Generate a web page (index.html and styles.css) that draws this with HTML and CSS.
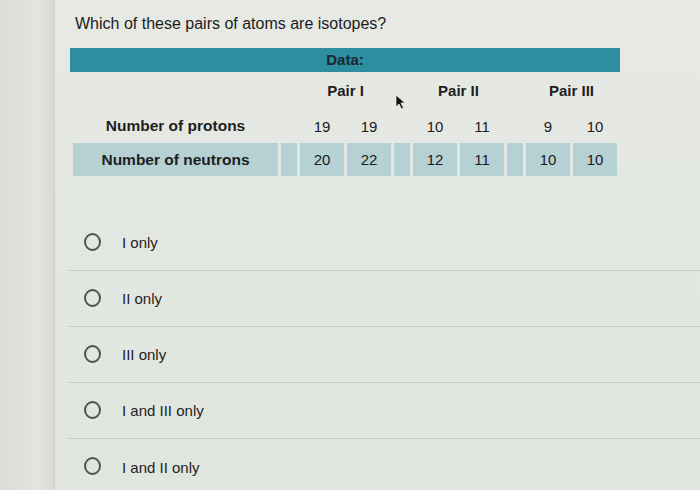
FILE: index.html
```html
<!DOCTYPE html>
<html>
<head>
<meta charset="utf-8">
<link rel="stylesheet" href="styles.css">
</head>
<body>
<div class="screen">
  <div class="strip"></div>
  <div class="panel">
    <p class="question">Which of these pairs of atoms are isotopes?</p>
    <div class="data-bar">Data:</div>
    <table class="data">
      <tr class="head-row">
        <td class="label"></td>
        <td class="sp"></td>
        <td class="pair" colspan="2">Pair I</td>
        <td class="sp"></td>
        <td class="pair" colspan="2">Pair II</td>
        <td class="sp"></td>
        <td class="pair" colspan="2">Pair III</td>
      </tr>
      <tr class="row-protons">
        <td class="label">Number of protons</td>
        <td class="sp"></td>
        <td class="v">19</td><td class="v">19</td>
        <td class="sp"></td>
        <td class="v">10</td><td class="v">11</td>
        <td class="sp"></td>
        <td class="v">9</td><td class="v">10</td>
      </tr>
      <tr class="row-neutrons">
        <td class="label">Number of neutrons</td>
        <td class="sp"></td>
        <td class="v">20</td><td class="v">22</td>
        <td class="sp"></td>
        <td class="v">12</td><td class="v">11</td>
        <td class="sp"></td>
        <td class="v">10</td><td class="v">10</td>
      </tr>
    </table>
    <ul class="options">
      <li class="option"><span class="radio"></span><span class="opt-text">I only</span></li>
      <li class="option"><span class="radio"></span><span class="opt-text">II only</span></li>
      <li class="option"><span class="radio"></span><span class="opt-text">III only</span></li>
      <li class="option"><span class="radio"></span><span class="opt-text">I and III only</span></li>
      <li class="option"><span class="radio"></span><span class="opt-text">I and II only</span></li>
    </ul>
    <svg class="cursor" width="12" height="16" viewBox="0 0 12 16">
      <path d="M1 1 L1 13 L4 10 L6.5 15 L8.5 14 L6 9 L10 9 Z" fill="#111" stroke="#eee" stroke-width="0.8"/>
    </svg>
  </div>
</div>
</body>
</html>
```
FILE: styles.css
```css
html, body {
  margin: 0;
  padding: 0;
}
body {
  width: 700px;
  height: 490px;
  overflow: hidden;
  font-family: "Liberation Sans", Arial, sans-serif;
  color: #1e1e1e;
  background: #dedfdb;
}
.screen {
  display: flex;
  height: 490px;
}
.strip {
  width: 55px;
  flex: none;
  background: linear-gradient(90deg, #dcdcd8 0%, #e3e3df 70%, #d8d9d5 100%);
}
.panel {
  position: relative;
  flex: 1;
  background: linear-gradient(180deg, #e7e9e4 0%, #e3e7e1 50%, #e0e5de 100%);
  padding: 14px 0 0 15px;
  box-shadow: -1px 0 2px rgba(0,0,0,0.06);
}
.question {
  margin: 0 0 15px 5px;
  font-size: 16px;
  line-height: 19px;
  color: #1c1c1c;
}
.data-bar {
  width: 550px;
  height: 24px;
  line-height: 24px;
  background: #2e8d9f;
  text-align: center;
  font-weight: bold;
  font-size: 15px;
  color: #182830;
}
.data {
  width: 550px;
  border-collapse: separate;
  border-spacing: 3px;
  margin-top: -3px;
  font-size: 15px;
  table-layout: fixed;
}
.data td {
  padding: 0;
  text-align: center;
}
.data td.label { width: 205px; font-weight: bold; font-size: 15.5px; }
.data td.sp { width: 16px; }
.data td.v { width: 44px; color: #1a1a1a; }
.data .pair { font-weight: bold; }
.head-row td { height: 32px; padding-top: 2px; }
.row-protons td { height: 28px; padding-top: 3px; }
.row-neutrons td {
  height: 33px;
  background: #b5d1d4;
}
.options {
  list-style: none;
  margin: 36px 0 0 -2px;
  padding: 0;
}
.option {
  display: flex;
  align-items: center;
  height: 56px;
  border-bottom: 1px solid #c9cfc8;
  box-sizing: border-box;
  padding-left: 16px;
}
.option:last-child { border-bottom: none; }
.radio {
  width: 13px;
  height: 14px;
  border: 2px solid #4f524f;
  border-radius: 50%;
  flex: none;
  margin-top: -2px;
}
.opt-text {
  margin-left: 21px;
  font-size: 15px;
  color: #222;
}
.cursor {
  position: absolute;
  left: 340px;
  top: 94px;
}
```
